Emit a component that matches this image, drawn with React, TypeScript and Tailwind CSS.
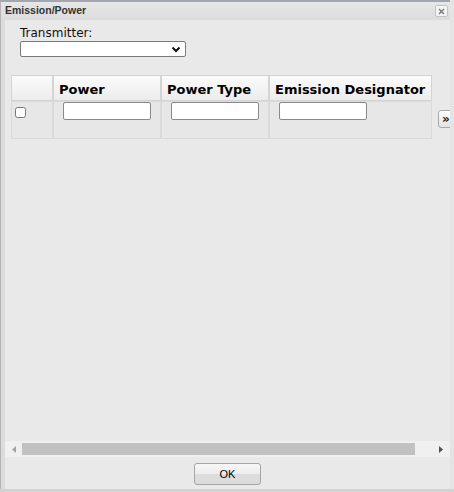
import React from "react";

const cols = [
  { label: "", w: "w-[42px]" },
  { label: "Power", w: "w-[108px]" },
  { label: "Power Type", w: "w-[108px]" },
  { label: "Emission Designator", w: "w-[163px]" },
];

function TextBox() {
  return (
    <input
      type="text"
      className="block h-[18px] w-[88px] rounded-[2px] border border-[#8a8a8a] bg-white px-1 text-[12px] outline-none"
    />
  );
}

export default function App() {
  return (
    <div className="relative h-[492px] w-[454px] overflow-hidden bg-[#e4e4e4] font-['DejaVu_Sans',sans-serif]">
      <div className="flex h-[489px] w-[450px] flex-col overflow-hidden border-l border-t-2 border-l-[#b4b4b4] border-t-[#a2a6ae] bg-[#e9e9e9]">
        {/* title bar */}
        <div className="flex h-[18px] shrink-0 items-center justify-between bg-gradient-to-b from-[#e7e7e7] to-[#dcdcdc] pl-1 pr-[2px]">
          <span className="font-['Liberation_Sans',sans-serif] text-[10.5px] font-bold text-[#333]">
            Emission/Power
          </span>
          <button className="flex h-[12px] w-[13px] items-center justify-center rounded-[2px] border border-[#c4c4c4] bg-[#f4f4f4]">
            <svg width="7" height="7" viewBox="0 0 7 7">
              <path d="M1 1L6 6M6 1L1 6" stroke="#7a7a7a" strokeWidth="1.5" />
            </svg>
          </button>
        </div>

        {/* body */}
        <div className="relative flex flex-1 flex-col border-l-[4px] border-[#dcdcdc]">
          <div className="flex-1 overflow-hidden">
            <div className="pl-[15px] pt-[6px]">
              <div className="text-[12px] leading-[14px] text-[#111]">Transmitter:</div>
              <div className="relative mt-[1px] h-[16px] w-[166px] rounded-[2px] border border-[#7a7a7a] bg-white">
                <svg
                  className="absolute right-[4px] top-[4px]"
                  width="10"
                  height="7"
                  viewBox="0 0 10 7"
                >
                  <path d="M1.5 1.5L5 5L8.5 1.5" fill="none" stroke="#111" strokeWidth="2" />
                </svg>
              </div>
            </div>

            <div className="ml-[6px] mt-[18px] flex">
              <div>
                <div className="flex">
                  {cols.map((c) => (
                    <div
                      key={c.label}
                      className={`${c.w} flex h-[26px] items-end border border-[#d4d4d4] bg-gradient-to-b from-[#fbfbfb] to-[#ececec] pb-[4px] pl-[5px] text-[13px] font-bold leading-none text-black`}
                    >
                      {c.label}
                    </div>
                  ))}
                </div>
                <div className="flex">
                  <div className="h-[38px] w-[42px] border border-[#dadada] bg-[#e7e7e7] pl-[3px] pt-[5px]">
                    <input type="checkbox" className="m-0 block h-[11px] w-[11px]" />
                  </div>
                  {cols.slice(1).map((c) => (
                    <div
                      key={c.label}
                      className={`${c.w} h-[38px] border border-[#dadada] bg-[#e7e7e7] pl-[9px]`}
                    >
                      <TextBox />
                    </div>
                  ))}
                </div>
              </div>
              <div className="ml-[6px] mt-[35px] flex h-[18px] w-[20px] shrink-0 items-center rounded-[3px] border border-[#a8a8a8] bg-gradient-to-b from-white to-[#e2e2e2] pl-[3px] text-[12px] font-bold text-[#222]">
                »
              </div>
            </div>
          </div>

          {/* horizontal scrollbar */}
          <div className="flex h-[16px] shrink-0 items-center bg-[#f0f0f0] pr-[1px]">
            <div className="flex h-full w-[17px] items-center justify-center">
              <svg width="4" height="7" viewBox="0 0 4 7">
                <path d="M4 0L0 3.5L4 7Z" fill="#a3a3a3" />
              </svg>
            </div>
            <div className="h-[12px] w-[393px] bg-[#c1c1c1]" />
            <div className="flex-1" />
            <div className="flex h-full w-[17px] items-center justify-center">
              <svg width="4" height="7" viewBox="0 0 4 7">
                <path d="M0 0L4 3.5L0 7Z" fill="#505050" />
              </svg>
            </div>
          </div>

          {/* footer */}
          <div className="flex h-[32px] shrink-0 items-start justify-center pt-[6px]">
            <button className="h-[22px] w-[67px] rounded-[3px] border border-[#a5a5a5] bg-[linear-gradient(to_bottom,#f7f7f7_0%,#ededed_50%,#dcdcdc_50%,#dcdcdc_100%)] font-['Liberation_Sans',sans-serif] text-[11px] text-black">
              OK
            </button>
          </div>
        </div>
      </div>
      <div className="h-[3px] w-full bg-[#d2d2d2]" />
    </div>
  );
}
